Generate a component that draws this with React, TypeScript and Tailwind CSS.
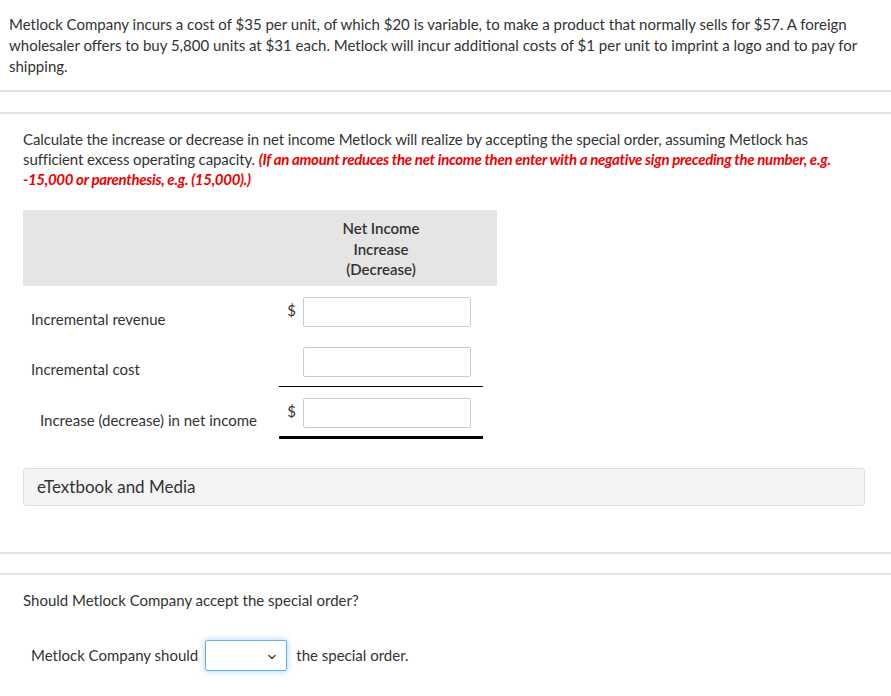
import { ChevronDown } from 'lucide-react';

const Divider = () => <div className="h-[2px] w-full bg-[#e2e2e2]" />;

function MoneyInput({ dollar }: { dollar?: boolean }) {
  return (
    <div className="flex items-start w-[204px]">
      <span className="w-[24px] pr-[7px] pt-[3px] text-right text-[15px] leading-[20px]">{dollar ? '$' : ''}</span>
      <input className="w-[168px] h-[30px] border border-[#cccccc] rounded-[2px] bg-white outline-none" />
    </div>
  );
}

export default function App() {
  return (
    <div className="w-[891px] min-h-[696px] bg-white text-[#333333]" style={{ fontFamily: 'Lato, "Open Sans", sans-serif' }}>
      {/* problem text */}
      <p className="px-[9px] pt-[14px] pb-[13px] text-[15px] leading-[21px]">
        Metlock Company incurs a cost of $35 per unit, of which $20 is variable, to make a product that normally sells for $57. A foreign
        wholesaler offers to buy 5,800 units at $31 each. Metlock will incur additional costs of $1 per unit to imprint a logo and to pay for
        shipping.
      </p>
      <Divider />
      <div className="h-[20px]" />
      <Divider />

      <div className="px-[23px]">
        <p className="pt-[15px] text-[15px] leading-[20px] tracking-[-0.1px]">
          Calculate the increase or decrease in net income Metlock will realize by accepting the special order, assuming Metlock has
          sufficient excess operating capacity.{' '}
          <span className="text-[#ee0000] font-bold italic tracking-[-0.3px]">
            (If an amount reduces the net income then enter with a negative sign preceding the number, e.g. -15,000 or parenthesis, e.g. (15,000).)
          </span>
        </p>

        {/* table */}
        <div className="mt-[21px] w-[474px]">
          <div className="flex h-[76px] bg-[#e5e5e5]">
            <div className="w-[256px]" />
            <div className="w-[204px] pt-[8px] text-center text-[15px] leading-[20.5px] font-semibold">
              Net Income
              <br />
              Increase
              <br />
              (Decrease)
            </div>
          </div>

          <div className="flex h-[41px] pt-[11px]">
            <div className="w-[256px] pl-[8px] pt-[12px] text-[15px] leading-[20px]">Incremental revenue</div>
            <MoneyInput dollar />
          </div>

          <div className="flex pt-[20px]">
            <div className="w-[256px] pl-[8px] pt-[12px] text-[15px] leading-[20px]">Incremental cost</div>
            <div className="pb-[9px] border-b border-black">
              <MoneyInput />
            </div>
          </div>

          <div className="flex">
            <div className="w-[256px] pl-[17px] pt-[23px] text-[15px] leading-[20px]">Increase (decrease) in net income</div>
            <div className="pt-[11px] pb-[8px] border-b-[3px] border-black">
              <MoneyInput dollar />
            </div>
          </div>
        </div>

        <div className="mt-[29px] mr-[3px] h-[38px] flex items-center pl-[13px] bg-[#f4f4f4] border border-[#dddddd] rounded-[3px] text-[17px]">
          eTextbook and Media
        </div>
      </div>

      <div className="h-[46px]" />
      <Divider />
      <div className="h-[19px]" />
      <Divider />

      <div className="px-[23px]">
        <p className="pt-[15px] text-[15px] leading-[20px]">Should Metlock Company accept the special order?</p>
        <div className="flex items-center mt-[30px] pl-[8px] text-[15px]">
          <span>Metlock Company should</span>
          <div className="relative ml-[7px] w-[82px] h-[31px] border border-[#66afe9] rounded-[2px] bg-white shadow-[0_0_6px_rgba(102,175,233,0.6)]">
            <ChevronDown className="absolute right-[8px] top-[10px] w-[12px] h-[12px] text-[#444444]" strokeWidth={3} />
          </div>
          <span className="ml-[9px]">the special order.</span>
        </div>
      </div>
    </div>
  );
}
